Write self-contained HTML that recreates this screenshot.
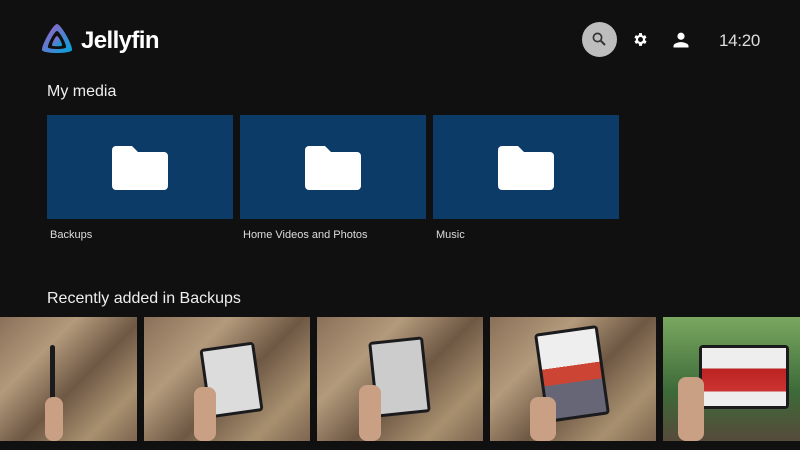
<!DOCTYPE html>
<html><head><style>
body{margin:0;width:800px;height:450px;background:#101010;overflow:hidden;font-family:"Liberation Sans",sans-serif;color:#eee;position:relative}
.a{position:absolute}
.card{position:absolute;top:115px;width:186px;height:104px;background:#0b3b66}
.fold{position:absolute;left:65px;top:31px;width:56px;height:44px}
.lbl{position:absolute;top:229px;font-size:11px;color:#ddd}
.ph{position:absolute;top:317px;height:124px;background:linear-gradient(135deg,#8a7058 0%,#b39a7c 30%,#6e5844 55%,#a8906f 80%,#7d6550 100%)}
.tab{position:absolute;background:#1b1b1d;border-radius:4px}
.scr{position:absolute;left:3px;top:3px;right:3px;bottom:3px;background:#dcdcdc}
.hand{position:absolute;background:#c9a084;border-radius:8px}
</style></head><body>
<svg class="a" style="left:39px;top:22px" width="36" height="34" viewBox="0 0 36 34"><defs><linearGradient id="g" x1="0" y1="0" x2="1" y2="1"><stop offset="0" stop-color="#aa5cc3"/><stop offset="1" stop-color="#00a4dc"/></linearGradient></defs><path d="M18 2C14 2 2 24 3 28 4 32 32 32 33 28 34 24 22 2 18 2Z" fill="url(#g)"/><path d="M18 9C15.5 9 8 23 9 25.5 10 27.5 26 27.5 27 25.5 28 23 20.5 9 18 9Z" fill="#101010"/><path d="M18 14C16.5 14 12.5 22 13 23.5 13.5 24.5 22.5 24.5 23 23.5 23.5 22 19.5 14 18 14Z" fill="url(#g)"/></svg>
<div class="a" style="left:81px;top:27px;font-size:24px;font-weight:bold;color:#fff;letter-spacing:-0.6px">Jellyfin</div>
<div class="a" style="left:582px;top:22px;width:35px;height:35px;border-radius:50%;background:#bdbdbd"></div>
<svg class="a" style="left:590px;top:30px" width="18" height="18" viewBox="0 0 24 24"><circle cx="10" cy="10" r="5.5" fill="none" stroke="#333" stroke-width="2.2"/><path d="M14 14l6 6" stroke="#333" stroke-width="2.6"/></svg>
<svg class="a" style="left:632px;top:31px" width="17" height="17" viewBox="0 0 24 24"><path fill="#fff" d="M19.4 13a7.5 7.5 0 000-2l2.1-1.6-2-3.5-2.5 1a7.6 7.6 0 00-1.7-1L15 3h-4l-.4 2.9a7.6 7.6 0 00-1.7 1l-2.5-1-2 3.5L6.6 11a7.5 7.5 0 000 2l-2.1 1.6 2 3.5 2.5-1a7.6 7.6 0 001.7 1L11 21h4l.4-2.9a7.6 7.6 0 001.7-1l2.5 1 2-3.5zM13 15.5a3.5 3.5 0 110-7 3.5 3.5 0 010 7z" transform="translate(-1 0)"/></svg>
<svg class="a" style="left:671px;top:30px" width="20" height="20" viewBox="0 0 24 24"><circle cx="12" cy="7.5" r="4.3" fill="#fff"/><path d="M3 21v-2c0-3 6-4.5 9-4.5s9 1.5 9 4.5v2z" fill="#fff"/></svg>
<div class="a" style="left:719px;top:31px;font-size:17px;color:#ddd;letter-spacing:-0.3px">14:20</div>
<div class="a" style="left:47px;top:83px;font-size:16px;color:#eee">My media</div>
<div class="card" style="left:47px"><svg class="fold" viewBox="0 0 56 44"><path d="M4 0h16l6 6h26a4 4 0 014 4v30a4 4 0 01-4 4H4a4 4 0 01-4-4V4a4 4 0 014-4z" fill="#fff"/></svg></div>
<div class="card" style="left:240px"><svg class="fold" viewBox="0 0 56 44"><path d="M4 0h16l6 6h26a4 4 0 014 4v30a4 4 0 01-4 4H4a4 4 0 01-4-4V4a4 4 0 014-4z" fill="#fff"/></svg></div>
<div class="card" style="left:433px"><svg class="fold" viewBox="0 0 56 44"><path d="M4 0h16l6 6h26a4 4 0 014 4v30a4 4 0 01-4 4H4a4 4 0 01-4-4V4a4 4 0 014-4z" fill="#fff"/></svg></div>
<div class="lbl" style="left:50px">Backups</div>
<div class="lbl" style="left:243px">Home Videos and Photos</div>
<div class="lbl" style="left:436px">Music</div>
<div class="a" style="left:47px;top:290px;font-size:16px;color:#eee">Recently added in Backups</div>
<div class="ph" style="left:0;width:137px"><div class="tab" style="left:50px;top:28px;width:5px;height:80px"></div><div class="hand" style="left:45px;top:80px;width:18px;height:44px"></div></div>
<div class="ph" style="left:144px;width:166px"><div class="tab" style="left:60px;top:28px;width:55px;height:70px;transform:rotate(-8deg)"><div class="scr"></div></div><div class="hand" style="left:50px;top:70px;width:22px;height:54px"></div></div>
<div class="ph" style="left:317px;width:166px"><div class="tab" style="left:55px;top:22px;width:55px;height:76px;transform:rotate(-6deg)"><div class="scr" style="background:#ccc"></div></div><div class="hand" style="left:42px;top:68px;width:22px;height:56px"></div></div>
<div class="ph" style="left:490px;width:166px"><div class="tab" style="left:50px;top:12px;width:64px;height:90px;transform:rotate(-8deg)"><div class="scr" style="background:linear-gradient(#eee 40%,#c43 40%,#c43 60%,#667 60%)"></div></div><div class="hand" style="left:40px;top:80px;width:26px;height:44px"></div></div>
<div class="ph" style="left:663px;width:137px;background:linear-gradient(#7aa860,#3d6a38 60%,#564a3a)"><div class="tab" style="left:36px;top:28px;width:90px;height:64px"><div class="scr" style="background:linear-gradient(#eee 35%,#b22 35%,#c33 75%,#eee 75%)"></div></div><div class="hand" style="left:15px;top:60px;width:26px;height:64px"></div></div>
</body></html>
